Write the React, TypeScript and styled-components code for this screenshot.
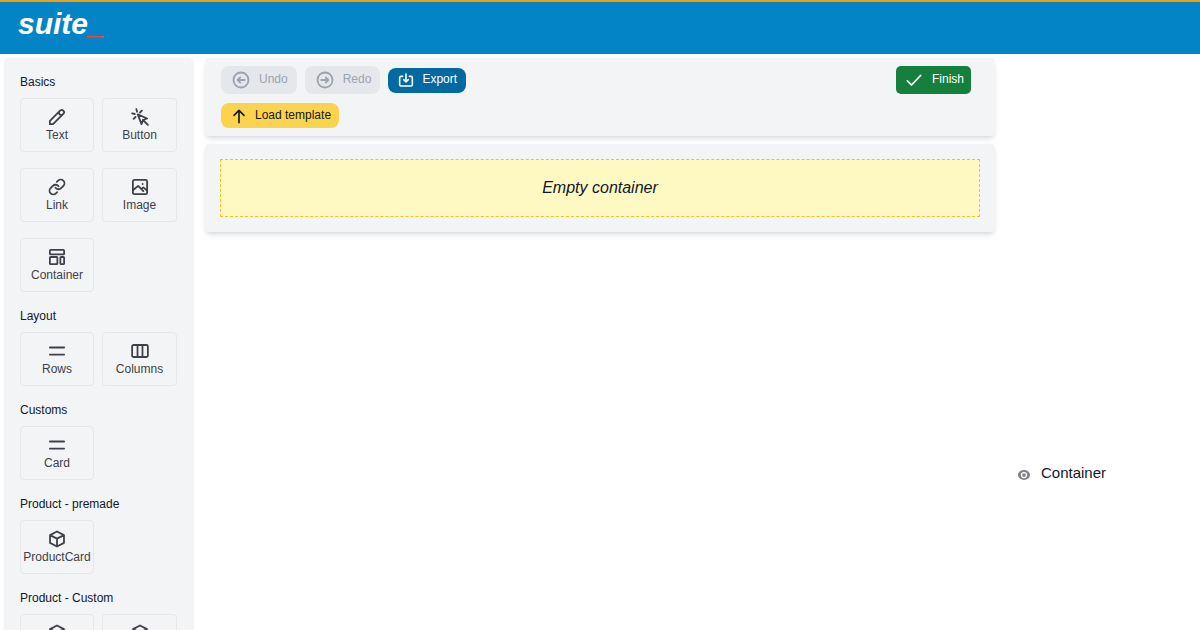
import React from "react";
import styled, { createGlobalStyle, css } from "styled-components";

const GlobalStyle = createGlobalStyle`
  *, *::before, *::after { box-sizing: border-box; }
  body {
    margin: 0;
    background: #fff;
    color: #111827;
    font-family: "Liberation Sans", Arial, sans-serif;
    font-size: 12px;
    line-height: 16px;
  }
  button { font: inherit; color: inherit; cursor: pointer; }
`;

const Page = styled.div`
  display: flex;
  flex-direction: column;
  height: 100vh;
  overflow: hidden;
`;

const Header = styled.header`
  flex: none;
  height: 54px;
  padding: 4px 18px;
  border-top: 2px solid #f59e0b;
  background: #0284c7;
`;

const Logo = styled.a`
  color: #fff;
  font-size: 30px;
  line-height: 36px;
  font-weight: 700;
  font-style: italic;
  text-decoration: none;
  span { color: #ef4444; }
`;

const Workspace = styled.div`
  flex: 1;
  min-height: 0;
  display: grid;
  grid-template-columns: 1fr 4fr 1fr;
  padding-top: 4px;
`;

const Sidebar = styled.aside`
  margin: 0 6px 0 4px;
  padding: 16px 17px 16px 16px;
  align-self: start;
  border-radius: 6px;
  background: #f3f4f6;
  box-shadow: 0 0 2px rgba(0, 0, 0, 0.06);
`;

const Group = styled.section`
  margin-bottom: 16px;
`;

const GroupTitle = styled.h2`
  margin: 0 0 8px;
  font-size: 12px;
  line-height: 16px;
  font-weight: 400;
`;

const Tiles = styled.div`
  display: grid;
  grid-template-columns: 74fr 75fr;
  gap: 16px 8px;
`;

const Tile = styled.button`
  display: flex;
  flex-direction: column;
  align-items: center;
  gap: 1px;
  min-width: 0;
  height: 54px;
  padding: 9px 0 0;
  border: 1px solid #e5e7eb;
  border-radius: 4px;
  background: transparent;
  color: #3f4148;
  white-space: nowrap;
  svg { flex: none; }
`;

const Main = styled.main`
  display: flex;
  flex-direction: column;
  gap: 8px;
  margin: 0 5px;
`;

const panel = css`
  border-radius: 4px;
  background: #f3f4f6;
  box-shadow: 0 4px 6px -1px rgba(0, 0, 0, 0.1), 0 2px 4px -2px rgba(0, 0, 0, 0.1);
`;

const Toolbar = styled.div`
  ${panel}
  display: flex;
  justify-content: space-between;
  align-items: flex-start;
  padding: 8px 24px 8px 16px;
`;

const Actions = styled.div`
  display: flex;
  flex-direction: column;
  align-items: flex-start;
  gap: 9px;
`;

const ActionRow = styled.div`
  display: flex;
  align-items: center;
  gap: 8px;
`;

type Tone = "muted" | "primary" | "warning" | "success";
const tones: Record<Tone, { fill: string; ink: string; padding: string; radius: number; gap: number }> = {
  muted: { fill: "#e5e7eb", ink: "#9ca3af", padding: "0 9px 0 11px", radius: 8, gap: 9 },
  primary: { fill: "#0369a1", ink: "#fff", padding: "0 9px 0 10px", radius: 8, gap: 8 },
  warning: { fill: "#fcd34d", ink: "#111827", padding: "0 8px 0 10px", radius: 8, gap: 8 },
  success: { fill: "#15803d", ink: "#fff", padding: "0 7px 0 8px", radius: 5, gap: 8 },
};

const ActionButton = styled.button<{ $tone: Tone; $tall?: boolean }>`
  display: flex;
  align-items: center;
  gap: ${(p) => tones[p.$tone].gap}px;
  height: ${(p) => (p.$tall ? 28 : 25)}px;
  padding: ${(p) => tones[p.$tone].padding};
  border: 0;
  border-radius: ${(p) => tones[p.$tone].radius}px;
  background: ${(p) => tones[p.$tone].fill};
  color: ${(p) => tones[p.$tone].ink};
  white-space: nowrap;
  svg { flex: none; }
  span { padding-bottom: 2px; }
`;

const Canvas = styled.section`
  ${panel}
  padding: 15px;
`;

const DropZone = styled.div`
  padding: 16px;
  border: 1px dashed #fbbf24;
  background: #fef9c3;
  font-size: 16px;
  line-height: 24px;
  font-style: italic;
  text-align: center;
`;

const Layers = styled.aside`
  display: flex;
  align-items: center;
  align-self: start;
  gap: 11px;
  padding: 403px 18px 0;
  font-size: 15px;
  line-height: 24px;
  svg { color: #808488; margin-top: 4px; }
`;

const shapes = {
  pencil: <path d="M2.5 21.5v-4.2L16.5 3.3a2.5 2.5 0 0 1 3.5 0l.7.7a2.5 2.5 0 0 1 0 3.5L6.7 21.5H2.5ZM14.8 5.2a3.2 3.2 0 0 0 4 4" />,
  click: (
    <>
      <path d="m9 8.500 5 13 2-5.500 5.500-2Z" />
      <path d="M7.200 1.500 8 5M5 8l-3.500-.8M14.500 3.500 12 6M6 12l-2.500 2.500M16 16l6.500 6.500" />
    </>
  ),
  link: (
    <>
      <path d="M10 13a5 5 0 0 0 7.54.54l3-3a5 5 0 0 0-7.07-7.07l-1.72 1.71" />
      <path d="M14 11a5 5 0 0 0-7.54-.54l-3 3a5 5 0 0 0 7.07 7.07l1.71-1.71" />
    </>
  ),
  image: (
    <>
      <rect x="2.5" y="2.5" width="19" height="19" rx="2" />
      <path d="m3 16 6.5-5.5 7 7M14 14.5l2.5-2 4.5 4M15.5 8h.01" />
    </>
  ),
  container: (
    <>
      <rect x="2.5" y="2.5" width="19" height="6" rx="1" />
      <rect x="2.5" y="12" width="10" height="9.5" rx="1" />
      <rect x="16.5" y="12" width="5" height="9.5" rx="1" />
    </>
  ),
  rows: <path d="M2.500 7.300h19M2.500 16.700h19" />,
  columns: (
    <>
      <rect x="1.5" y="4" width="21" height="16" rx="2" />
      <path d="M8.7 4v16M15.3 4v16" />
    </>
  ),
  box: <path d="M12 2 21.3 6.8v10.4L12 22l-9.300-4.800V6.800L12 2ZM2.700 6.800l9.300 4.700 9.300-4.700M12 11.500v10.500" />,
  left: (
    <>
      <circle cx="12" cy="12" r="10" />
      <path d="M17 12H8M11 8.500 7.500 12l3.500 3.500" />
    </>
  ),
  right: (
    <>
      <circle cx="12" cy="12" r="10" />
      <path d="M7 12h9M13 8.500l3.500 3.500-3.500 3.500" />
    </>
  ),
  save: <path d="M7 6.500H4.500a2 2 0 0 0-2 2V19a2 2 0 0 0 2 2h15a2 2 0 0 0 2-2V8.500a2 2 0 0 0-2-2H17M12 3v12M8.500 11.500l3.500 3.500 3.500-3.500" />,
  up: <path d="M12 22V3.500M4.500 11 12 3.500l7.500 7.500" />,
  check: <path d="m4 13 5 5L20 6.500" />,
};

type Shape = keyof typeof shapes;

const Icon = ({ name, size = 18, weight = 2 }: { name: Shape; size?: number; weight?: number }) => (
  <svg
    width={size}
    height={size}
    viewBox="0 0 24 24"
    fill="none"
    stroke="currentColor"
    strokeWidth={weight}
    strokeLinecap="round"
    strokeLinejoin="round"
    aria-hidden="true"
  >
    {shapes[name]}
  </svg>
);

const EyeIcon = () => (
  <svg width="12" height="12" viewBox="0 0 24 24" fill="none" aria-hidden="true">
    <ellipse cx="12" cy="12" rx="12" ry="10" fill="currentColor" />
    <circle cx="12" cy="12" r="5" stroke="#fff" strokeWidth="2.5" />
  </svg>
);

const groups: { title: string; items: { icon: Shape; label?: string }[] }[] = [
  {
    title: "Basics",
    items: [
      { icon: "pencil", label: "Text" },
      { icon: "click", label: "Button" },
      { icon: "link", label: "Link" },
      { icon: "image", label: "Image" },
      { icon: "container", label: "Container" },
    ],
  },
  {
    title: "Layout",
    items: [
      { icon: "rows", label: "Rows" },
      { icon: "columns", label: "Columns" },
    ],
  },
  { title: "Customs", items: [{ icon: "rows", label: "Card" }] },
  { title: "Product - premade", items: [{ icon: "box", label: "ProductCard" }] },
  { title: "Product - Custom", items: [{ icon: "box" }, { icon: "box" }] },
];

export default function App() {
  return (
    <>
      <GlobalStyle />
      <Page>
        <Header>
          <Logo href="#">suite<span>_</span></Logo>
        </Header>
        <Workspace>
          <Sidebar>
            {groups.map((group) => (
              <Group key={group.title}>
                <GroupTitle>{group.title}</GroupTitle>
                <Tiles>
                  {group.items.map((item, i) => (
                    <Tile key={i} type="button" aria-label={item.label ?? "Product"}>
                      <Icon name={item.icon} weight={2.4} />
                      {item.label}
                    </Tile>
                  ))}
                </Tiles>
              </Group>
            ))}
          </Sidebar>
          <Main>
            <Toolbar>
              <Actions>
                <ActionRow>
                  <ActionButton type="button" $tone="muted" $tall disabled>
                    <Icon name="left" weight={2.4} />
                    <span>Undo</span>
                  </ActionButton>
                  <ActionButton type="button" $tone="muted" $tall disabled>
                    <Icon name="right" weight={2.4} />
                    <span>Redo</span>
                  </ActionButton>
                  <ActionButton type="button" $tone="primary">
                    <Icon name="save" size={16} weight={2.4} />
                    <span>Export</span>
                  </ActionButton>
                </ActionRow>
                <ActionButton type="button" $tone="warning">
                  <Icon name="up" size={16} weight={2.4} />
                  <span>Load template</span>
                </ActionButton>
              </Actions>
              <ActionButton type="button" $tone="success" $tall>
                <Icon name="check" size={20} />
                <span>Finish</span>
              </ActionButton>
            </Toolbar>
            <Canvas>
              <DropZone>Empty container</DropZone>
            </Canvas>
          </Main>
          <Layers>
            <EyeIcon />
            <span>Container</span>
          </Layers>
        </Workspace>
      </Page>
    </>
  );
}
